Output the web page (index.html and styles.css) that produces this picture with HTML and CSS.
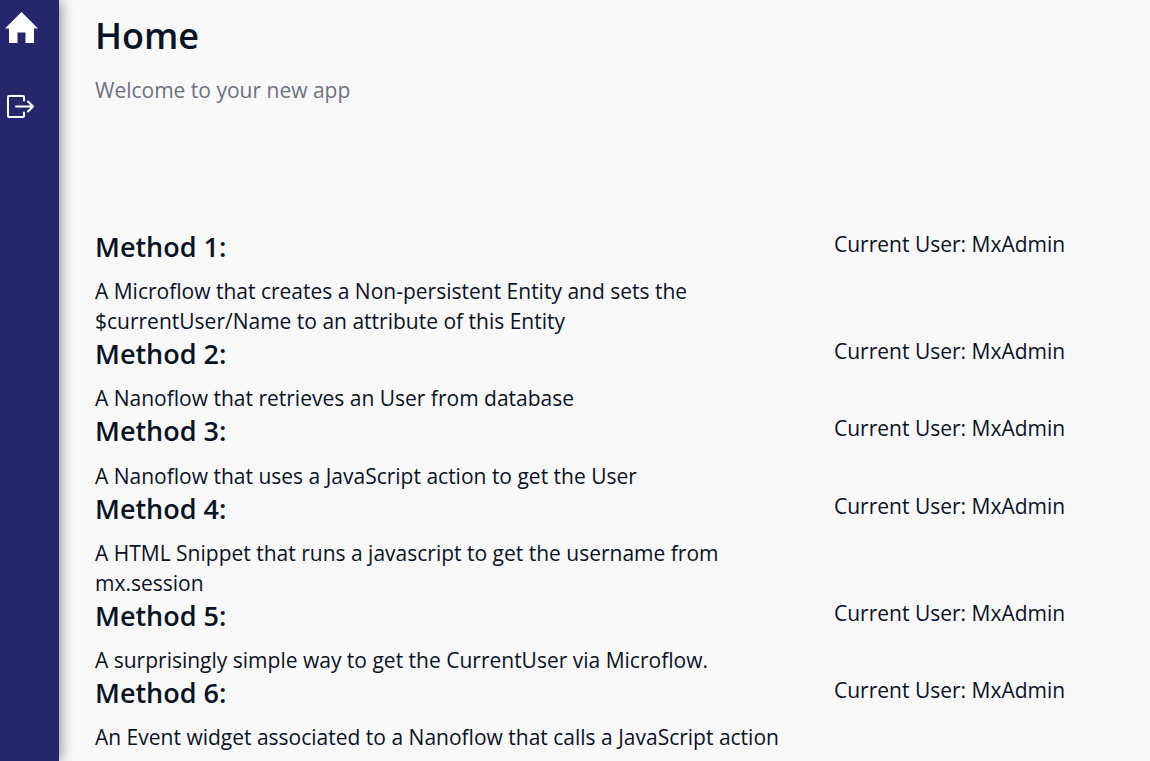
FILE: index.html
```html
<!DOCTYPE html>
<html lang="en">
<head>
  <meta charset="UTF-8">
  <title>Home</title>
  <link rel="stylesheet" href="styles.css">
</head>
<body>
<div class="layout">
  <nav class="sidebar">
    <svg class="icon-home" viewBox="0 0 33 32" width="33" height="32"><path fill="#fff" d="M16.500 0 0 16.500h4V31h8.500V20.500h8V31H29V16.500h4z"/></svg>
    <svg class="icon-logout" viewBox="0 0 28 24" width="28" height="24"><path fill="none" stroke="#fff" stroke-width="2" stroke-linecap="round" stroke-linejoin="round" d="M17 5.500V2a1 1 0 0 0-1-1H2a1 1 0 0 0-1 1v19a1 1 0 0 0 1 1h14a1 1 0 0 0 1-1v-3.500M9 11.500h17M21 6.500l5 5-5 5"/></svg>
  </nav>
  <main class="content">
    <h1>Home</h1>
    <p class="subtitle">Welcome to your new app</p>
    <section class="methods">
      <div class="row">
        <div class="desc"><h3>Method 1:</h3><p>A Microflow that creates a Non-persistent Entity and sets the $currentUser/Name to an attribute of this Entity</p></div>
        <div class="user">Current User: MxAdmin</div>
      </div>
      <div class="row">
        <div class="desc"><h3>Method 2:</h3><p>A Nanoflow that retrieves an User from database</p></div>
        <div class="user">Current User: MxAdmin</div>
      </div>
      <div class="row">
        <div class="desc"><h3>Method 3:</h3><p>A Nanoflow that uses a JavaScript action to get the User</p></div>
        <div class="user">Current User: MxAdmin</div>
      </div>
      <div class="row">
        <div class="desc"><h3>Method 4:</h3><p>A HTML Snippet that runs a javascript to get the username from mx.session</p></div>
        <div class="user">Current User: MxAdmin</div>
      </div>
      <div class="row">
        <div class="desc"><h3>Method 5:</h3><p>A surprisingly simple way to get the CurrentUser via Microflow.</p></div>
        <div class="user">Current User: MxAdmin</div>
      </div>
      <div class="row">
        <div class="desc"><h3>Method 6:</h3><p>An Event widget associated to a Nanoflow that calls a JavaScript action</p></div>
        <div class="user">Current User: MxAdmin</div>
      </div>
    </section>
  </main>
</div>
</body>
</html>
```
FILE: styles.css
```css
html, body {
  margin: 0;
  height: 100%;
  overflow: hidden;
}
body {
  background-color: #f8f8f8;
  color: #0a1325;
  font-family: "Open Sans", sans-serif;
  font-size: 21px;
}
.layout {
  display: flex;
  height: 761px;
}
.sidebar {
  width: 59px;
  flex-shrink: 0;
  background-color: #24276c;
  box-shadow: 2px 0 12px rgba(0, 0, 0, 0.4);
  display: flex;
  flex-direction: column;
  align-items: flex-start;
  padding: 12px 0 0 5px;
  box-sizing: border-box;
}
.icon-logout {
  margin: 51px 0 0 2px;
}
.content {
  flex: 1;
  padding: 0 36px;
}
h1 {
  margin: 13px 0 0;
  font-size: 36px;
  font-weight: 600;
  line-height: 46px;
}
.subtitle {
  margin: 16px 0 0;
  color: #6c717e;
  line-height: 30px;
}
.methods {
  margin-top: 124px;
}
.row {
  display: flex;
}
.desc {
  width: 692px;
  margin-right: 47px;
}
.desc h3 {
  margin: 0;
  font-size: 27px;
  font-weight: 600;
  line-height: 36.200px;
}
.desc p {
  margin: 11px 0 0;
  line-height: 30px;
}
.user {
  line-height: 30px;
}
```
